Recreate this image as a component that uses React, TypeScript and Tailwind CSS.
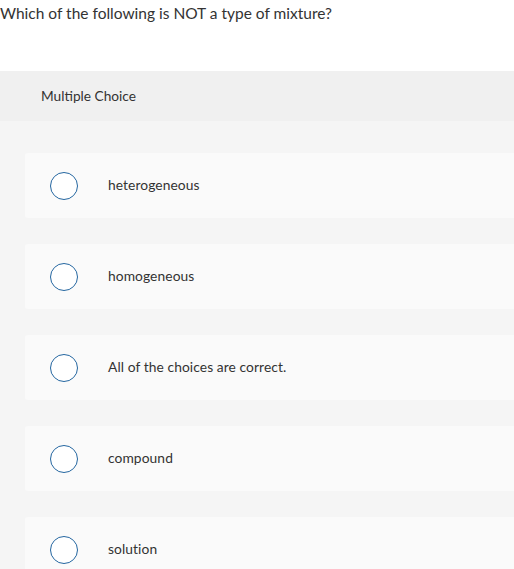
const choices = [
  'heterogeneous',
  'homogeneous',
  'All of the choices are correct.',
  'compound',
  'solution',
];

export default function App() {
  return (
    <div className="h-[569px] w-[514px] overflow-hidden bg-white font-['Lato','Open_Sans',sans-serif] text-[#333]">
      <p className="pt-[2px] text-[15.5px] leading-[22px]">Which of the following is NOT a type of mixture?</p>

      <div className="mt-[47px] flex h-[50px] items-center bg-[#f0f0f0] pl-[41px] text-[13.7px]">
        Multiple Choice
      </div>

      <div className="flex flex-col gap-[26px] bg-[#f5f5f5] pl-[25px] pt-[32px] pb-[30px]">
        {choices.map(choice => (
          <label
            key={choice}
            className="flex h-[65px] cursor-pointer items-center rounded-l-[3px] bg-[#fafafa] pl-[25px]"
          >
            <span className="h-[28px] w-[28px] shrink-0 rounded-full border-[1.5px] border-[#2466a0] bg-white" />
            <span className="ml-[30px] text-[13.8px] tracking-[0.08px]">{choice}</span>
          </label>
        ))}
      </div>
    </div>
  );
}
